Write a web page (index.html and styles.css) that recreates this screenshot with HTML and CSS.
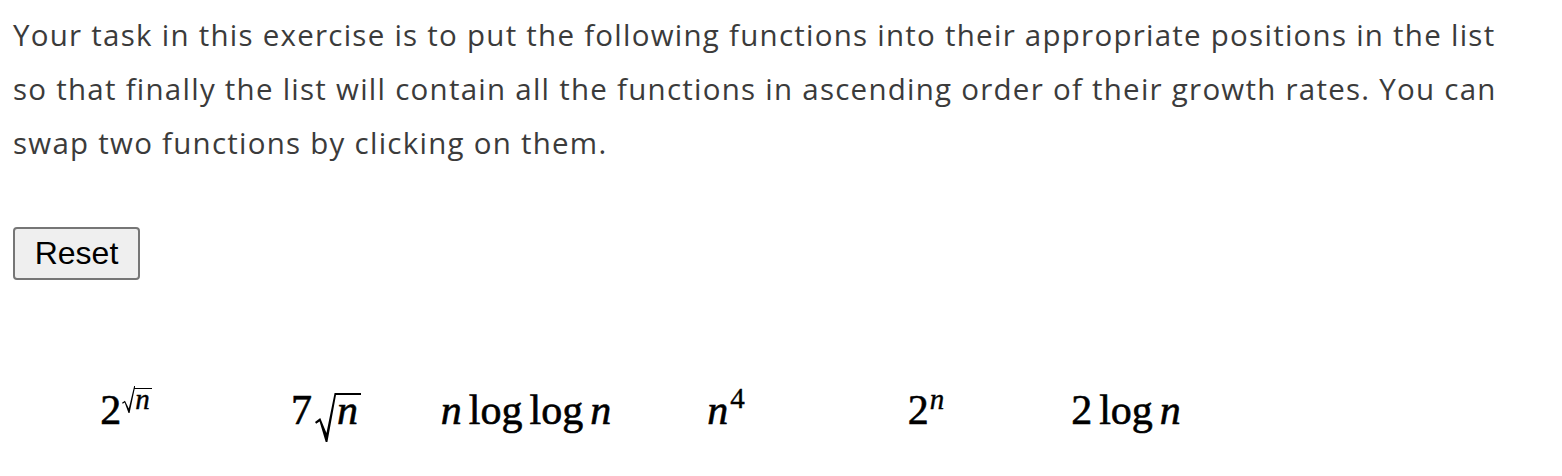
FILE: index.html
```html
<!DOCTYPE html>
<html>
<head>
<meta charset="utf-8">
<link rel="stylesheet" href="styles.css">
</head>
<body>
<div class="page">
  <p class="task">Your task in this exercise is to put the following functions into their appropriate positions in the list so that finally the list will contain all the functions in ascending order of their growth rates. You can swap two functions by clicking on them.</p>
  <button class="reset">Reset</button>
  <div class="funcs">
    <div class="cell"><span class="m"><span class="rm">2</span><span class="supbox"><svg class="rad-s" viewBox="0 0 22 50" preserveAspectRatio="none"><polygon points="0,30 5,26.5 11.5,40 20.6,0 22,0 22,2.4 12.8,48 11,48 4.5,29.5 1.2,31.5"/></svg><span class="over-s"><i>n</i></span></span></span></div>
    <div class="cell"><span class="m"><span class="rm">7</span><svg class="rad" viewBox="0 0 22 50" preserveAspectRatio="none"><polygon points="0,29 5.5,25 12,40 20.5,0 22,0 22,2 13,49 11.2,49 4.8,28.5 1.2,30.8"/></svg><span class="over"><i>n</i></span></span></div>
    <div class="cell"><span class="m"><i>n</i><span class="sp"></span>log<span class="sp"></span>log<span class="sp"></span><i>n</i></span></div>
    <div class="cell"><span class="m"><i>n</i><span class="supbox up">4</span></span></div>
    <div class="cell"><span class="m"><span class="rm">2</span><span class="supbox"><i>n</i></span></span></div>
    <div class="cell"><span class="m"><span class="rm">2</span><span class="sp"></span>log<span class="sp"></span><i>n</i></span></div>
  </div>
</div>
</body>
</html>
```
FILE: styles.css
```css
html, body {
  margin: 0;
  padding: 0;
  background: #ffffff;
}
.page {
  padding: 8px 13px 0 13px;
}
.task {
  margin: 0;
  width: 1515px;
  font-family: "Open Sans", "Liberation Sans", sans-serif;
  font-size: 29.5px;
  letter-spacing: 1.25px;
  line-height: 54px;
  color: #3b3b3b;
}
.reset {
  display: block;
  margin-top: 57px;
  width: 127px;
  height: 53px;
  padding: 0;
  font-family: "Liberation Sans", Arial, sans-serif;
  font-size: 32px;
  color: #000;
  background: #efefef;
  border: 2px solid #767676;
  border-radius: 4px;
}
.funcs {
  display: flex;
  margin-top: 100px;
  padding-left: 13px;
}
.cell {
  width: 200px;
  display: flex;
  justify-content: center;
}
.m {
  font-family: "Liberation Serif", "DejaVu Serif", serif;
  font-size: 42px;
  line-height: 60px;
  color: #000;
  white-space: nowrap;
  -webkit-text-stroke: 0.6px #000;
}
.m i {
  font-style: italic;
}
.sp {
  display: inline-block;
  width: 7px;
}
.supbox {
  display: inline-block;
  font-size: 29px;
  line-height: 20px;
  vertical-align: 15px;
  margin-left: 1px;
  -webkit-text-stroke: 0.4px #000;
}
.up {
  vertical-align: 16px;
  margin-left: 2px;
}
.rad {
  display: inline-block;
  width: 21px;
  height: 50px;
  margin-left: 3px;
  vertical-align: -19px;
  fill: #000;
}
.over {
  display: inline-block;
  border-top: 2px solid #000;
  line-height: 30px;
  padding: 0 3px 0 2px;
  margin-left: -1px;
}
.rad-s {
  display: inline-block;
  width: 13px;
  height: 28px;
  vertical-align: -5px;
  fill: #000;
}
.over-s {
  display: inline-block;
  border-top: 1.5px solid #000;
  line-height: 21px;
  padding: 0 2px 0 1px;
  margin-left: -1px;
}
```
